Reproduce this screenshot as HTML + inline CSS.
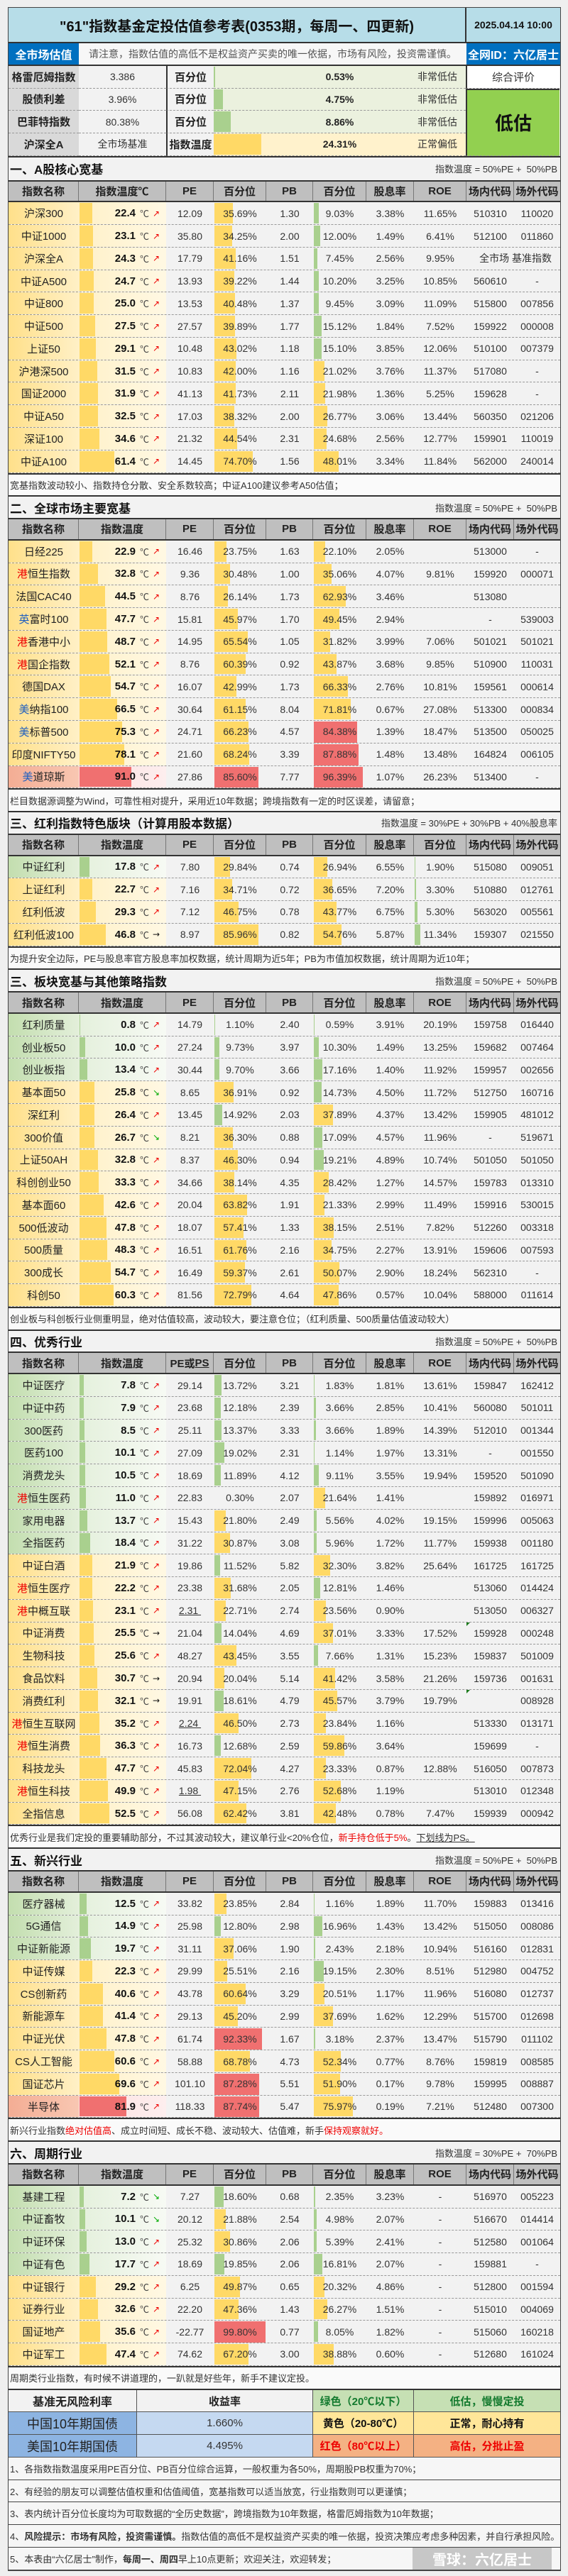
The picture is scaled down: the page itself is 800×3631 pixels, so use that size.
<!DOCTYPE html>
<html><head><meta charset="utf-8">
<style>
*{box-sizing:border-box;margin:0;padding:0}
html,body{width:800px;height:3631px;background:#efefef;overflow:hidden}
body{font-family:"Liberation Sans","Noto Sans CJK SC",sans-serif;color:#333;font-size:14px}
.w{position:absolute;left:12px;top:11px;width:777px;outline:1px solid #444;background:#f2f2f2;overflow:hidden}
.title{display:grid;grid-template-columns:645px 132px;height:50px;background:#b7dde8;border-bottom:2px solid #333}
.title div{display:flex;align-items:center;justify-content:center;font-weight:bold;color:#111}
.title div:first-child{font-size:20px;border-right:2px solid #333}
.title div:last-child{font-size:14px}
.r2{display:grid;grid-template-columns:99px 546px 132px;height:31.77px;border-bottom:2px solid #333}
.r2 div{display:flex;align-items:center;justify-content:center;overflow:hidden;white-space:nowrap}
.blue{background:#0070c0;color:#fff;font-weight:bold;font-size:16px}
.mk{display:grid;grid-template-columns:99px 123px 67px 355px 132px;grid-template-rows:repeat(4,31.77px);border-bottom:2px solid #333}
.mk>div{display:flex;align-items:center;justify-content:center;border-bottom:1px dashed #999;position:relative}
.mk .nm{background:#d9d9d9;font-weight:bold;font-size:15px;color:#222}
.mk .lb{font-size:15px;font-weight:bold;color:#222;border-left:2px solid #333}
.mk .bar{justify-content:center;font-weight:bold;font-size:14px;color:#222}
.mk .bar s{position:absolute;left:0;top:1px;bottom:1px}
.mk .bar em{position:absolute;right:12px;font-style:normal;font-weight:normal;font-size:14px;color:#333}
.mk .rt{border-left:2px solid #333}
.eval{background:#fff;font-size:15px;color:#333}
.low{grid-row:2/5;grid-column:5;background:#92d050;font-size:26px;font-weight:bold;color:#111;border-left:2px solid #333;border-top:2px solid #333;display:flex;align-items:center;justify-content:center}
.sh{height:31.77px;display:flex;align-items:center;justify-content:space-between;padding:0 4px 0 2px;background:#f2f2f2;border-top:2px solid #333;overflow:hidden;white-space:nowrap}
.sh b{font-size:17px;color:#111}
.sh span{font-size:13px;color:#333}
.cols,.r{display:grid;grid-template-columns:99px 123px 67px 74px 66px 75px 67px 74px 67px 65px;height:31.77px}
.cols{background:#bfbfbf;border-top:2px solid #333;border-bottom:2px solid #333}
.cols div{display:flex;align-items:center;justify-content:center;font-weight:bold;font-size:15px;color:#222;border-right:1px solid #777;overflow:hidden;white-space:nowrap}
.cols div:last-child{border-right:0}
.r{border-bottom:1px dashed #999}
.r>*{position:relative;display:flex;align-items:center;justify-content:center;font-style:normal;font-weight:normal;text-decoration:none;background:#f2f2f2;font-size:14px;color:#333;white-space:nowrap;overflow:hidden}
.r>b{font-size:15px;color:#222}
.Y>b{background:linear-gradient(90deg,#ffe08a,#fff0c6)}
.G>b{background:linear-gradient(90deg,#c3deaf,#e3efda)}
.R>b{background:linear-gradient(90deg,#f4ad94,#f8c7b2)}
.Y>.t{background:linear-gradient(90deg,#fff1c8,#fff8e3)}
.G>.t{background:linear-gradient(90deg,#e4f0dc,#f7faf4)}
.R>.t{background:linear-gradient(90deg,#fde0e0,#fdeeee)}
.t s{position:absolute;left:1px;top:1px;bottom:1px}
.Y .t s{background:#ffd966}.G .t s{background:#a9d08e}.R .t s{background:#f07070}
.t em{position:absolute;right:43px;font-style:normal;font-weight:bold;font-size:15px;color:#111}
.t var{position:absolute;left:86px;font-style:normal;font-size:13px;color:#444}
.t kbd{position:absolute;left:104px;font-family:"DejaVu Sans",sans-serif;font-size:12px;color:#e00}
.t kbd.d{color:#0a0}.t kbd.f{color:#111}
.p s{position:absolute;left:1px;top:1px;bottom:1px}
.p span{position:relative}
s.y{background:#ffd966}s.g{background:#a9d08e}s.r{background:#f07070}
.hk{color:#e00}.us{color:#1f5fbf}
.ul{text-decoration:underline!important}
.cm::before{content:"";position:absolute;left:0;top:0;border-top:5px solid #1a7a1a;border-right:5px solid transparent}
.note{height:31.77px;display:flex;align-items:center;padding-left:2px;background:#fafafa;border-top:2px solid #333;font-size:13px;color:#333;white-space:nowrap;overflow:hidden}
.red{color:#e00}
.rf{display:grid;grid-template-columns:181px 248px 142px 206px;border-top:2px solid #333}
.rf div{height:31.77px;display:flex;align-items:center;justify-content:center;border-right:1px solid #555;border-bottom:1px solid #555;white-space:nowrap;overflow:hidden}
.fn{height:31.77px;display:flex;align-items:center;padding-left:2px;background:#f6f6f6;border-bottom:1px solid #444;font-size:13px;color:#333;white-space:nowrap;position:relative;overflow:hidden}
.wm{position:absolute;right:12px;top:0;height:31px;width:196px;background:rgba(160,160,160,.55);color:#fff;font-size:20px;display:flex;align-items:center;justify-content:center;font-weight:bold}
</style></head><body>
<div class="w">
<div class="title"><div>"61"指数基金定投估值参考表(0353期，每周一、四更新)</div><div>2025.04.14 10:00</div></div>
<div class="r2"><div class="blue">全市场估值</div><div style="color:#555;font-size:14px;background:#f7f7f7">请注意，指数估值的高低不是权益资产买卖的唯一依据，市场有风险，投资需谨慎。</div><div class="blue">全网ID：六亿居士</div></div>
<div class="mk">
<div class="nm">格雷厄姆指数</div><div>3.386</div><div class="lb">百分位</div><div class="bar" style="background:#ebf1de"><s style="width:1.5px;background:#a9d08e"></s>0.53%<em>非常低估</em></div><div class="rt eval">综合评价</div>
<div class="nm">股债利差</div><div>3.96%</div><div class="lb">百分位</div><div class="bar" style="background:#ebf1de"><s style="width:13px;background:#a9d08e"></s>4.75%<em>非常低估</em></div>
<div class="nm">巴菲特指数</div><div>80.38%</div><div class="lb">百分位</div><div class="bar" style="background:#ebf1de"><s style="width:24px;background:#a9d08e"></s>8.86%<em>非常低估</em></div>
<div class="nm">沪深全A</div><div>全市场基准</div><div class="lb">指数温度</div><div class="bar" style="background:#fff2cc"><s style="width:67px;background:#ffd966"></s><span style="position:relative">24.31%</span><em>正常偏低</em></div>
<div class="low">低估</div>
</div>

<div class="sh" style="border-top:0"><b>一、A股核心宽基</b><span>指数温度 = 50%PE + &nbsp;50%PB</span></div>
<div class="cols"><div>指数名称</div><div>指数温度℃</div><div>PE</div><div>百分位</div><div>PB</div><div>百分位</div><div>股息率</div><div>ROE</div><div>场内代码</div><div>场外代码</div></div>
<div class="r Y"><b>沪深300</b><i class="t"><s style="width:18px"></s><em>22.4</em><var>℃</var><kbd>↗</kbd></i><i>12.09</i><i class="p"><s class="y" style="width:25.7px"></s><span>35.69%</span></i><i>1.30</i><i class="p"><s class="g" style="width:6.5px"></s><span>9.03%</span></i><i>3.38%</i><i>11.65%</i><i>510310</i><i>110020</i></div>
<div class="r Y"><b>中证1000</b><i class="t"><s style="width:18.5px"></s><em>23.1</em><var>℃</var><kbd>↗</kbd></i><i>35.80</i><i class="p"><s class="y" style="width:24.7px"></s><span>34.25%</span></i><i>2.00</i><i class="p"><s class="g" style="width:8.6px"></s><span>12.00%</span></i><i>1.49%</i><i>6.41%</i><i>512100</i><i>011860</i></div>
<div class="r Y" style="grid-template-columns:99px 123px 67px 74px 66px 75px 67px 74px 132px"><b>沪深全A</b><i class="t"><s style="width:19.4px"></s><em>24.3</em><var>℃</var><kbd>↗</kbd></i><i>17.79</i><i class="p"><s class="y" style="width:29.6px"></s><span>41.16%</span></i><i>1.51</i><i class="p"><s class="g" style="width:5.4px"></s><span>7.45%</span></i><i>2.56%</i><i>9.95%</i><i style="justify-content:flex-end;padding-right:12px">全市场 基准指数</i></div>
<div class="r Y"><b>中证A500</b><i class="t"><s style="width:19.8px"></s><em>24.7</em><var>℃</var><kbd>↗</kbd></i><i>13.93</i><i class="p"><s class="y" style="width:28.2px"></s><span>39.22%</span></i><i>1.44</i><i class="p"><s class="g" style="width:7.3px"></s><span>10.20%</span></i><i>3.25%</i><i>10.85%</i><i>560610</i><i>-</i></div>
<div class="r Y"><b>中证800</b><i class="t"><s style="width:20px"></s><em>25.0</em><var>℃</var><kbd>↗</kbd></i><i>13.53</i><i class="p"><s class="y" style="width:29.1px"></s><span>40.48%</span></i><i>1.37</i><i class="p"><s class="g" style="width:6.8px"></s><span>9.45%</span></i><i>3.09%</i><i>11.09%</i><i>515800</i><i>007856</i></div>
<div class="r Y"><b>中证500</b><i class="t"><s style="width:22px"></s><em>27.5</em><var>℃</var><kbd>↗</kbd></i><i>27.57</i><i class="p"><s class="y" style="width:28.7px"></s><span>39.89%</span></i><i>1.77</i><i class="p"><s class="g" style="width:10.9px"></s><span>15.12%</span></i><i>1.84%</i><i>7.52%</i><i>159922</i><i>000008</i></div>
<div class="r Y"><b>上证50</b><i class="t"><s style="width:23.3px"></s><em>29.1</em><var>℃</var><kbd>↗</kbd></i><i>10.48</i><i class="p"><s class="y" style="width:31px"></s><span>43.02%</span></i><i>1.18</i><i class="p"><s class="g" style="width:10.9px"></s><span>15.10%</span></i><i>3.85%</i><i>12.06%</i><i>510100</i><i>007379</i></div>
<div class="r Y"><b>沪港深500</b><i class="t"><s style="width:25.2px"></s><em>31.5</em><var>℃</var><kbd>↗</kbd></i><i>10.83</i><i class="p"><s class="y" style="width:30.2px"></s><span>42.00%</span></i><i>1.16</i><i class="p"><s class="y" style="width:15.1px"></s><span>21.02%</span></i><i>3.76%</i><i>11.37%</i><i>517080</i><i>-</i></div>
<div class="r Y"><b>国证2000</b><i class="t"><s style="width:25.5px"></s><em>31.9</em><var>℃</var><kbd>↗</kbd></i><i>41.13</i><i class="p"><s class="y" style="width:30px"></s><span>41.73%</span></i><i>2.11</i><i class="p"><s class="y" style="width:15.8px"></s><span>21.98%</span></i><i>1.36%</i><i>5.25%</i><i>159628</i><i>-</i></div>
<div class="r Y"><b>中证A50</b><i class="t"><s style="width:26px"></s><em>32.5</em><var>℃</var><kbd>↗</kbd></i><i>17.03</i><i class="p"><s class="y" style="width:27.6px"></s><span>38.32%</span></i><i>2.00</i><i class="p"><s class="y" style="width:19.3px"></s><span>26.77%</span></i><i>3.06%</i><i>13.44%</i><i>560350</i><i>021206</i></div>
<div class="r Y"><b>深证100</b><i class="t"><s style="width:27.7px"></s><em>34.6</em><var>℃</var><kbd>↗</kbd></i><i>21.32</i><i class="p"><s class="y" style="width:32.1px"></s><span>44.54%</span></i><i>2.31</i><i class="p"><s class="y" style="width:17.8px"></s><span>24.68%</span></i><i>2.56%</i><i>12.77%</i><i>159901</i><i>110019</i></div>
<div class="r Y"><b>中证A100</b><i class="t"><s style="width:49.1px"></s><em>61.4</em><var>℃</var><kbd>↗</kbd></i><i>14.45</i><i class="p"><s class="y" style="width:53.8px"></s><span>74.70%</span></i><i>1.56</i><i class="p"><s class="y" style="width:34.6px"></s><span>48.01%</span></i><i>3.34%</i><i>11.84%</i><i>562000</i><i>240014</i></div>
<div class="note">宽基指数波动较小、指数持仓分散、安全系数较高；中证A100建议参考A50估值；</div>

<div class="sh"><b>二、全球市场主要宽基</b><span>指数温度 = 50%PE + &nbsp;50%PB</span></div>
<div class="cols"><div>指数名称</div><div>指数温度</div><div>PE</div><div>百分位</div><div>PB</div><div>百分位</div><div>股息率</div><div>ROE</div><div>场内代码</div><div>场外代码</div></div>
<div class="r Y"><b>日经225</b><i class="t"><s style="width:18.3px"></s><em>22.9</em><var>℃</var><kbd>↗</kbd></i><i>16.46</i><i class="p"><s class="y" style="width:17.1px"></s><span>23.75%</span></i><i>1.63</i><i class="p"><s class="y" style="width:15.9px"></s><span>22.10%</span></i><i>2.05%</i><i></i><i>513000</i><i>-</i></div>
<div class="r Y"><b><span class="hk">港</span>恒生指数</b><i class="t"><s style="width:26.2px"></s><em>32.8</em><var>℃</var><kbd>↗</kbd></i><i>9.36</i><i class="p"><s class="y" style="width:21.9px"></s><span>30.48%</span></i><i>1.00</i><i class="p"><s class="y" style="width:25.2px"></s><span>35.06%</span></i><i>4.07%</i><i>9.81%</i><i>159920</i><i>000071</i></div>
<div class="r Y"><b>法国CAC40</b><i class="t"><s style="width:35.6px"></s><em>44.5</em><var>℃</var><kbd>↗</kbd></i><i>8.76</i><i class="p"><s class="y" style="width:18.8px"></s><span>26.14%</span></i><i>1.73</i><i class="p"><s class="y" style="width:45.3px"></s><span>62.93%</span></i><i>3.46%</i><i></i><i>513080</i><i></i></div>
<div class="r Y"><b><span class="us">英</span>富时100</b><i class="t"><s style="width:38.2px"></s><em>47.7</em><var>℃</var><kbd>↗</kbd></i><i>15.81</i><i class="p"><s class="y" style="width:33.1px"></s><span>45.97%</span></i><i>1.70</i><i class="p"><s class="y" style="width:35.6px"></s><span>49.45%</span></i><i>2.94%</i><i></i><i>-</i><i>539003</i></div>
<div class="r Y"><b><span class="hk">港</span>香港中小</b><i class="t"><s style="width:39px"></s><em>48.7</em><var>℃</var><kbd>↗</kbd></i><i>14.95</i><i class="p"><s class="y" style="width:47.2px"></s><span>65.54%</span></i><i>1.05</i><i class="p"><s class="y" style="width:22.9px"></s><span>31.82%</span></i><i>3.99%</i><i>7.06%</i><i>501021</i><i>501021</i></div>
<div class="r Y"><b><span class="hk">港</span>国企指数</b><i class="t"><s style="width:41.7px"></s><em>52.1</em><var>℃</var><kbd>↗</kbd></i><i>8.76</i><i class="p"><s class="y" style="width:43.5px"></s><span>60.39%</span></i><i>0.92</i><i class="p"><s class="y" style="width:31.6px"></s><span>43.87%</span></i><i>3.68%</i><i>9.85%</i><i>510900</i><i>110031</i></div>
<div class="r Y"><b>德国DAX</b><i class="t"><s style="width:43.8px"></s><em>54.7</em><var>℃</var><kbd>↗</kbd></i><i>16.07</i><i class="p"><s class="y" style="width:31px"></s><span>42.99%</span></i><i>1.73</i><i class="p"><s class="y" style="width:47.8px"></s><span>66.33%</span></i><i>2.76%</i><i>10.81%</i><i>159561</i><i>000614</i></div>
<div class="r Y"><b><span class="us">美</span>纳指100</b><i class="t"><s style="width:53.2px"></s><em>66.5</em><var>℃</var><kbd>↗</kbd></i><i>30.64</i><i class="p"><s class="y" style="width:44px"></s><span>61.15%</span></i><i>8.04</i><i class="p"><s class="y" style="width:51.7px"></s><span>71.81%</span></i><i>0.67%</i><i>27.08%</i><i>513300</i><i>000834</i></div>
<div class="r Y"><b><span class="us">美</span>标普500</b><i class="t"><s style="width:60.2px"></s><em>75.3</em><var>℃</var><kbd>↗</kbd></i><i>24.71</i><i class="p"><s class="y" style="width:47.7px"></s><span>66.23%</span></i><i>4.57</i><i class="p"><s class="r" style="width:60.8px"></s><span>84.38%</span></i><i>1.39%</i><i>18.47%</i><i>513500</i><i>050025</i></div>
<div class="r Y"><b>印度NIFTY50</b><i class="t"><s style="width:62.5px"></s><em>78.1</em><var>℃</var><kbd>↗</kbd></i><i>21.60</i><i class="p"><s class="y" style="width:49.1px"></s><span>68.24%</span></i><i>3.39</i><i class="p"><s class="r" style="width:63.3px"></s><span>87.88%</span></i><i>1.48%</i><i>13.48%</i><i>164824</i><i>006105</i></div>
<div class="r R"><b><span class="us">美</span>道琼斯</b><i class="t"><s style="width:72.8px"></s><em>91.0</em><var>℃</var><kbd>↗</kbd></i><i>27.86</i><i class="p"><s class="r" style="width:61.6px"></s><span>85.60%</span></i><i>7.77</i><i class="p"><s class="r" style="width:69.4px"></s><span>96.39%</span></i><i>1.07%</i><i>26.23%</i><i>513400</i><i>-</i></div>
<div class="note">栏目数据源调整为Wind，可靠性相对提升，采用近10年数据；跨境指数有一定的时区误差，请留意；</div>

<div class="sh"><b>三、红利指数特色版块（计算用股本数据）</b><span>指数温度 = 30%PE + 30%PB + 40%股息率</span></div>
<div class="cols"><div>指数名称</div><div>指数温度</div><div>PE</div><div>百分位</div><div>PB</div><div>百分位</div><div>股息率</div><div>百分位</div><div>场内代码</div><div>场外代码</div></div>
<div class="r G"><b>中证红利</b><i class="t"><s style="width:14.2px"></s><em>17.8</em><var>℃</var><kbd>↗</kbd></i><i>7.80</i><i class="p"><s class="y" style="width:21.5px"></s><span>29.84%</span></i><i>0.74</i><i class="p"><s class="y" style="width:19.4px"></s><span>26.94%</span></i><i>6.55%</i><i class="p"><s class="g" style="width:1.4px"></s><span>1.90%</span></i><i>515080</i><i>009051</i></div>
<div class="r Y"><b>上证红利</b><i class="t"><s style="width:18.2px"></s><em>22.7</em><var>℃</var><kbd>↗</kbd></i><i>7.16</i><i class="p"><s class="y" style="width:25px"></s><span>34.71%</span></i><i>0.72</i><i class="p"><s class="y" style="width:26.4px"></s><span>36.65%</span></i><i>7.20%</i><i class="p"><s class="g" style="width:2.4px"></s><span>3.30%</span></i><i>510880</i><i>012761</i></div>
<div class="r Y"><b>红利低波</b><i class="t"><s style="width:23.4px"></s><em>29.3</em><var>℃</var><kbd>↗</kbd></i><i>7.12</i><i class="p"><s class="y" style="width:33.7px"></s><span>46.75%</span></i><i>0.78</i><i class="p"><s class="y" style="width:31.5px"></s><span>43.77%</span></i><i>6.75%</i><i class="p"><s class="g" style="width:3.8px"></s><span>5.30%</span></i><i>563020</i><i>005561</i></div>
<div class="r Y"><b>红利低波100</b><i class="t"><s style="width:37.4px"></s><em>46.8</em><var>℃</var><kbd class="f">→</kbd></i><i>8.97</i><i class="p"><s class="y" style="width:61.9px"></s><span>85.96%</span></i><i>0.82</i><i class="p"><s class="y" style="width:39.4px"></s><span>54.76%</span></i><i>5.87%</i><i class="p"><s class="g" style="width:8.2px"></s><span>11.34%</span></i><i>159307</i><i>021550</i></div>
<div class="note">为提升安全边际，PE与股息率官方股息率加权数据，统计周期为近5年；PB为市值加权数据，统计周期为近10年；</div>

<div class="sh"><b>三、板块宽基与其他策略指数</b><span>指数温度 = 50%PE + &nbsp;50%PB</span></div>
<div class="cols"><div>指数名称</div><div>指数温度</div><div>PE</div><div>百分位</div><div>PB</div><div>百分位</div><div>股息率</div><div>ROE</div><div>场内代码</div><div>场外代码</div></div>
<div class="r G"><b>红利质量</b><i class="t"><s style="width:0.6px"></s><em>0.8</em><var>℃</var><kbd>↗</kbd></i><i>14.79</i><i class="p"><s class="g" style="width:1px"></s><span>1.10%</span></i><i>2.40</i><i class="p"><s class="g" style="width:0.5px"></s><span>0.59%</span></i><i>3.91%</i><i>20.19%</i><i>159758</i><i>016440</i></div>
<div class="r G"><b>创业板50</b><i class="t"><s style="width:8px"></s><em>10.0</em><var>℃</var><kbd>↗</kbd></i><i>27.24</i><i class="p"><s class="g" style="width:7px"></s><span>9.73%</span></i><i>3.97</i><i class="p"><s class="g" style="width:7.4px"></s><span>10.30%</span></i><i>1.49%</i><i>13.25%</i><i>159682</i><i>007464</i></div>
<div class="r G"><b>创业板指</b><i class="t"><s style="width:10.7px"></s><em>13.4</em><var>℃</var><kbd>↗</kbd></i><i>30.44</i><i class="p"><s class="g" style="width:7px"></s><span>9.70%</span></i><i>3.66</i><i class="p"><s class="g" style="width:12.4px"></s><span>17.16%</span></i><i>1.40%</i><i>11.92%</i><i>159957</i><i>002656</i></div>
<div class="r Y"><b>基本面50</b><i class="t"><s style="width:20.6px"></s><em>25.8</em><var>℃</var><kbd class="d">↘</kbd></i><i>8.65</i><i class="p"><s class="y" style="width:26.6px"></s><span>36.91%</span></i><i>0.92</i><i class="p"><s class="g" style="width:10.6px"></s><span>14.73%</span></i><i>4.50%</i><i>11.72%</i><i>512750</i><i>160716</i></div>
<div class="r Y"><b>深红利</b><i class="t"><s style="width:21.1px"></s><em>26.4</em><var>℃</var><kbd>↗</kbd></i><i>13.45</i><i class="p"><s class="g" style="width:10.7px"></s><span>14.92%</span></i><i>2.03</i><i class="p"><s class="y" style="width:27.3px"></s><span>37.89%</span></i><i>4.37%</i><i>13.42%</i><i>159905</i><i>481012</i></div>
<div class="r Y"><b>300价值</b><i class="t"><s style="width:21.4px"></s><em>26.7</em><var>℃</var><kbd class="d">↘</kbd></i><i>8.21</i><i class="p"><s class="y" style="width:26.1px"></s><span>36.30%</span></i><i>0.88</i><i class="p"><s class="g" style="width:12.3px"></s><span>17.09%</span></i><i>4.57%</i><i>11.96%</i><i>-</i><i>519671</i></div>
<div class="r Y"><b>上证50AH</b><i class="t"><s style="width:26.2px"></s><em>32.8</em><var>℃</var><kbd>↗</kbd></i><i>8.37</i><i class="p"><s class="y" style="width:33.3px"></s><span>46.30%</span></i><i>0.94</i><i class="p"><s class="g" style="width:13.8px"></s><span>19.21%</span></i><i>4.89%</i><i>10.74%</i><i>501050</i><i>501050</i></div>
<div class="r Y"><b>科创创业50</b><i class="t"><s style="width:26.6px"></s><em>33.3</em><var>℃</var><kbd>↗</kbd></i><i>34.66</i><i class="p"><s class="y" style="width:27.5px"></s><span>38.14%</span></i><i>4.35</i><i class="p"><s class="y" style="width:20.5px"></s><span>28.42%</span></i><i>1.27%</i><i>14.57%</i><i>159783</i><i>013310</i></div>
<div class="r Y"><b>基本面60</b><i class="t"><s style="width:34.1px"></s><em>42.6</em><var>℃</var><kbd>↗</kbd></i><i>20.04</i><i class="p"><s class="y" style="width:46px"></s><span>63.82%</span></i><i>1.91</i><i class="p"><s class="y" style="width:15.4px"></s><span>21.33%</span></i><i>2.99%</i><i>11.49%</i><i>159916</i><i>530015</i></div>
<div class="r Y"><b>500低波动</b><i class="t"><s style="width:38.2px"></s><em>47.8</em><var>℃</var><kbd>↗</kbd></i><i>18.07</i><i class="p"><s class="y" style="width:41.3px"></s><span>57.41%</span></i><i>1.33</i><i class="p"><s class="y" style="width:27.5px"></s><span>38.15%</span></i><i>2.51%</i><i>7.82%</i><i>512260</i><i>003318</i></div>
<div class="r Y"><b>500质量</b><i class="t"><s style="width:38.6px"></s><em>48.3</em><var>℃</var><kbd>↗</kbd></i><i>16.51</i><i class="p"><s class="y" style="width:44.5px"></s><span>61.76%</span></i><i>2.16</i><i class="p"><s class="y" style="width:25px"></s><span>34.75%</span></i><i>2.27%</i><i>13.91%</i><i>159606</i><i>007593</i></div>
<div class="r Y"><b>300成长</b><i class="t"><s style="width:43.8px"></s><em>54.7</em><var>℃</var><kbd>↗</kbd></i><i>16.49</i><i class="p"><s class="y" style="width:42.7px"></s><span>59.37%</span></i><i>2.61</i><i class="p"><s class="y" style="width:36.1px"></s><span>50.07%</span></i><i>2.90%</i><i>18.24%</i><i>562310</i><i>-</i></div>
<div class="r Y"><b>科创50</b><i class="t"><s style="width:48.2px"></s><em>60.3</em><var>℃</var><kbd>↗</kbd></i><i>81.56</i><i class="p"><s class="y" style="width:52.4px"></s><span>72.79%</span></i><i>4.64</i><i class="p"><s class="y" style="width:34.5px"></s><span>47.86%</span></i><i>0.57%</i><i>10.04%</i><i>588000</i><i>011614</i></div>
<div class="note">创业板与科创板行业侧重明显，绝对估值较高，波动较大，要注意仓位；（红利质量、500质量估值波动较大）</div>

<div class="sh"><b>四、优秀行业</b><span>指数温度 = 50%PE + &nbsp;50%PB</span></div>
<div class="cols"><div>指数名称</div><div>指数温度</div><div>PE或<u>PS</u></div><div>百分位</div><div>PB</div><div>百分位</div><div>股息率</div><div>ROE</div><div>场内代码</div><div>场外代码</div></div>
<div class="r G"><b>中证医疗</b><i class="t"><s style="width:6.2px"></s><em>7.8</em><var>℃</var><kbd>↗</kbd></i><i>29.14</i><i class="p"><s class="g" style="width:9.9px"></s><span>13.72%</span></i><i>3.21</i><i class="p"><s class="g" style="width:1.3px"></s><span>1.83%</span></i><i>1.81%</i><i>13.61%</i><i>159847</i><i>162412</i></div>
<div class="r G"><b>中证中药</b><i class="t"><s style="width:6.3px"></s><em>7.9</em><var>℃</var><kbd>↗</kbd></i><i>23.68</i><i class="p"><s class="g" style="width:8.8px"></s><span>12.18%</span></i><i>2.39</i><i class="p"><s class="g" style="width:2.6px"></s><span>3.66%</span></i><i>2.85%</i><i>10.41%</i><i>560080</i><i>501011</i></div>
<div class="r G"><b>300医药</b><i class="t"><s style="width:6.8px"></s><em>8.5</em><var>℃</var><kbd>↗</kbd></i><i>25.11</i><i class="p"><s class="g" style="width:9.6px"></s><span>13.37%</span></i><i>3.33</i><i class="p"><s class="g" style="width:2.6px"></s><span>3.66%</span></i><i>1.89%</i><i>14.39%</i><i>512010</i><i>001344</i></div>
<div class="r G"><b>医药100</b><i class="t"><s style="width:8.1px"></s><em>10.1</em><var>℃</var><kbd>↗</kbd></i><i>27.09</i><i class="p"><s class="g" style="width:13.7px"></s><span>19.02%</span></i><i>2.31</i><i class="p"><s class="g" style="width:0.8px"></s><span>1.14%</span></i><i>1.97%</i><i>13.31%</i><i>-</i><i>001550</i></div>
<div class="r G"><b>消费龙头</b><i class="t"><s style="width:8.4px"></s><em>10.5</em><var>℃</var><kbd>↗</kbd></i><i>18.69</i><i class="p"><s class="g" style="width:8.6px"></s><span>11.89%</span></i><i>4.12</i><i class="p"><s class="g" style="width:6.6px"></s><span>9.11%</span></i><i>3.55%</i><i>19.94%</i><i>159520</i><i>501090</i></div>
<div class="r G"><b><span class="hk">港</span>恒生医药</b><i class="t"><s style="width:8.8px"></s><em>11.0</em><var>℃</var><kbd>↗</kbd></i><i>22.83</i><i class="p"><span>0.30%</span></i><i>2.07</i><i class="p"><s class="y" style="width:15.6px"></s><span>21.64%</span></i><i>1.41%</i><i></i><i>159892</i><i>016971</i></div>
<div class="r G"><b>家用电器</b><i class="t"><s style="width:11px"></s><em>13.7</em><var>℃</var><kbd>↗</kbd></i><i>15.43</i><i class="p"><s class="y" style="width:15.7px"></s><span>21.80%</span></i><i>2.49</i><i class="p"><s class="g" style="width:4px"></s><span>5.56%</span></i><i>4.02%</i><i>19.15%</i><i>159996</i><i>005063</i></div>
<div class="r G"><b>全指医药</b><i class="t"><s style="width:14.7px"></s><em>18.4</em><var>℃</var><kbd>↗</kbd></i><i>31.22</i><i class="p"><s class="y" style="width:22.2px"></s><span>30.87%</span></i><i>3.08</i><i class="p"><s class="g" style="width:4.3px"></s><span>5.96%</span></i><i>1.72%</i><i>11.77%</i><i>159938</i><i>001180</i></div>
<div class="r Y"><b>中证白酒</b><i class="t"><s style="width:17.5px"></s><em>21.9</em><var>℃</var><kbd>↗</kbd></i><i>19.86</i><i class="p"><s class="g" style="width:8.3px"></s><span>11.52%</span></i><i>5.82</i><i class="p"><s class="y" style="width:23.3px"></s><span>32.30%</span></i><i>3.82%</i><i>25.64%</i><i>161725</i><i>161725</i></div>
<div class="r Y"><b><span class="hk">港</span>恒生医疗</b><i class="t"><s style="width:17.8px"></s><em>22.2</em><var>℃</var><kbd>↗</kbd></i><i>23.38</i><i class="p"><s class="y" style="width:22.8px"></s><span>31.68%</span></i><i>2.05</i><i class="p"><s class="g" style="width:9.2px"></s><span>12.81%</span></i><i>1.46%</i><i></i><i>513060</i><i>014424</i></div>
<div class="r Y"><b><span class="hk">港</span>中概互联</b><i class="t"><s style="width:18.5px"></s><em>23.1</em><var>℃</var><kbd>↗</kbd></i><i class="ul">2.31&nbsp;</i><i class="p"><s class="y" style="width:16.4px"></s><span>22.71%</span></i><i>2.74</i><i class="p"><s class="y" style="width:17px"></s><span>23.56%</span></i><i>0.90%</i><i></i><i>513050</i><i>006327</i></div>
<div class="r Y"><b>中证消费</b><i class="t"><s style="width:20.4px"></s><em>25.5</em><var>℃</var><kbd class="f">→</kbd></i><i>21.04</i><i class="p"><s class="g" style="width:10.1px"></s><span>14.04%</span></i><i>4.69</i><i class="p"><s class="y" style="width:26.6px"></s><span>37.01%</span></i><i>3.33%</i><i>17.52%</i><i class="cm">159928</i><i>000248</i></div>
<div class="r Y"><b>生物科技</b><i class="t"><s style="width:20.5px"></s><em>25.6</em><var>℃</var><kbd>↗</kbd></i><i>48.27</i><i class="p"><s class="y" style="width:31.3px"></s><span>43.45%</span></i><i>3.55</i><i class="p"><s class="g" style="width:5.5px"></s><span>7.66%</span></i><i>1.31%</i><i>15.23%</i><i>159837</i><i>501009</i></div>
<div class="r Y"><b>食品饮料</b><i class="t"><s style="width:24.6px"></s><em>30.7</em><var>℃</var><kbd class="f">→</kbd></i><i>20.94</i><i class="p"><s class="y" style="width:14.4px"></s><span>20.04%</span></i><i>5.14</i><i class="p"><s class="y" style="width:29.8px"></s><span>41.42%</span></i><i>3.58%</i><i>21.26%</i><i>159736</i><i>001631</i></div>
<div class="r Y"><b>消费红利</b><i class="t"><s style="width:25.7px"></s><em>32.1</em><var>℃</var><kbd class="f">→</kbd></i><i>19.91</i><i class="p"><s class="g" style="width:13.4px"></s><span>18.61%</span></i><i>4.79</i><i class="p"><s class="y" style="width:32.8px"></s><span>45.57%</span></i><i>3.79%</i><i>19.79%</i><i class="cm"></i><i>008928</i></div>
<div class="r Y"><b><span class="hk">港</span>恒生互联网</b><i class="t"><s style="width:28.2px"></s><em>35.2</em><var>℃</var><kbd>↗</kbd></i><i class="ul">2.24&nbsp;</i><i class="p"><s class="y" style="width:33.5px"></s><span>46.50%</span></i><i>2.73</i><i class="p"><s class="y" style="width:17.2px"></s><span>23.84%</span></i><i>1.16%</i><i></i><i>513330</i><i>013171</i></div>
<div class="r Y"><b><span class="hk">港</span>恒生消费</b><i class="t"><s style="width:29px"></s><em>36.3</em><var>℃</var><kbd>↗</kbd></i><i>16.73</i><i class="p"><s class="g" style="width:9.1px"></s><span>12.68%</span></i><i>2.59</i><i class="p"><s class="y" style="width:43.1px"></s><span>59.86%</span></i><i>3.64%</i><i></i><i>159699</i><i>-</i></div>
<div class="r Y"><b>科技龙头</b><i class="t"><s style="width:38.2px"></s><em>47.7</em><var>℃</var><kbd>↗</kbd></i><i>45.83</i><i class="p"><s class="y" style="width:51.9px"></s><span>72.04%</span></i><i>4.27</i><i class="p"><s class="y" style="width:16.8px"></s><span>23.33%</span></i><i>0.87%</i><i>12.88%</i><i>516050</i><i>007873</i></div>
<div class="r Y"><b><span class="hk">港</span>恒生科技</b><i class="t"><s style="width:39.9px"></s><em>49.9</em><var>℃</var><kbd>↗</kbd></i><i class="ul">1.98&nbsp;</i><i class="p"><s class="y" style="width:33.9px"></s><span>47.15%</span></i><i>2.76</i><i class="p"><s class="y" style="width:37.9px"></s><span>52.68%</span></i><i>1.19%</i><i></i><i>513010</i><i>012348</i></div>
<div class="r Y"><b>全指信息</b><i class="t"><s style="width:42px"></s><em>52.5</em><var>℃</var><kbd>↗</kbd></i><i>56.08</i><i class="p"><s class="y" style="width:44.9px"></s><span>62.42%</span></i><i>3.81</i><i class="p"><s class="y" style="width:30.6px"></s><span>42.48%</span></i><i>0.78%</i><i>7.47%</i><i>159939</i><i>000942</i></div>
<div class="note">优秀行业是我们定投的重要辅助部分，不过其波动较大，建议单行业&lt;20%仓位，<span class="red">新手持仓低于5%</span>。<u>下划线为PS。</u></div>

<div class="sh"><b>五、新兴行业</b><span>指数温度 = 50%PE + &nbsp;50%PB</span></div>
<div class="cols"><div>指数名称</div><div>指数温度</div><div>PE</div><div>百分位</div><div>PB</div><div>百分位</div><div>股息率</div><div>ROE</div><div>场内代码</div><div>场外代码</div></div>
<div class="r G"><b>医疗器械</b><i class="t"><s style="width:10px"></s><em>12.5</em><var>℃</var><kbd>↗</kbd></i><i>33.82</i><i class="p"><s class="y" style="width:17.2px"></s><span>23.85%</span></i><i>2.84</i><i class="p"><s class="g" style="width:0.8px"></s><span>1.16%</span></i><i>1.89%</i><i>11.70%</i><i>159883</i><i>013416</i></div>
<div class="r G"><b>5G通信</b><i class="t"><s style="width:11.9px"></s><em>14.9</em><var>℃</var><kbd>↗</kbd></i><i>25.98</i><i class="p"><s class="g" style="width:9.2px"></s><span>12.80%</span></i><i>2.98</i><i class="p"><s class="g" style="width:12.2px"></s><span>16.96%</span></i><i>1.43%</i><i>13.42%</i><i>515050</i><i>008086</i></div>
<div class="r G"><b>中证新能源</b><i class="t"><s style="width:15.8px"></s><em>19.7</em><var>℃</var><kbd>↗</kbd></i><i>31.11</i><i class="p"><s class="y" style="width:26.7px"></s><span>37.06%</span></i><i>1.90</i><i class="p"><s class="g" style="width:1.7px"></s><span>2.43%</span></i><i>2.18%</i><i>10.94%</i><i>516160</i><i>012831</i></div>
<div class="r Y"><b>中证传媒</b><i class="t"><s style="width:17.8px"></s><em>22.3</em><var>℃</var><kbd>↗</kbd></i><i>29.99</i><i class="p"><s class="y" style="width:18.4px"></s><span>25.51%</span></i><i>2.16</i><i class="p"><s class="g" style="width:13.8px"></s><span>19.15%</span></i><i>2.30%</i><i>8.51%</i><i>512980</i><i>004752</i></div>
<div class="r Y"><b>CS创新药</b><i class="t"><s style="width:32.5px"></s><em>40.6</em><var>℃</var><kbd>↗</kbd></i><i>43.78</i><i class="p"><s class="y" style="width:43.7px"></s><span>60.64%</span></i><i>3.29</i><i class="p"><s class="y" style="width:14.8px"></s><span>20.51%</span></i><i>1.17%</i><i>11.96%</i><i>516080</i><i>012737</i></div>
<div class="r Y"><b>新能源车</b><i class="t"><s style="width:33.1px"></s><em>41.4</em><var>℃</var><kbd>↗</kbd></i><i>29.13</i><i class="p"><s class="y" style="width:32.5px"></s><span>45.20%</span></i><i>2.99</i><i class="p"><s class="y" style="width:27.1px"></s><span>37.69%</span></i><i>1.62%</i><i>12.29%</i><i>515700</i><i>012698</i></div>
<div class="r Y"><b>中证光伏</b><i class="t"><s style="width:38.2px"></s><em>47.8</em><var>℃</var><kbd>↗</kbd></i><i>61.74</i><i class="p"><s class="r" style="width:66.5px"></s><span>92.33%</span></i><i>1.67</i><i class="p"><s class="g" style="width:2.3px"></s><span>3.18%</span></i><i>2.37%</i><i>13.47%</i><i>515790</i><i>011102</i></div>
<div class="r Y"><b>CS人工智能</b><i class="t"><s style="width:48.5px"></s><em>60.6</em><var>℃</var><kbd>↗</kbd></i><i>58.88</i><i class="p"><s class="y" style="width:49.5px"></s><span>68.78%</span></i><i>4.73</i><i class="p"><s class="y" style="width:37.7px"></s><span>52.34%</span></i><i>0.77%</i><i>8.76%</i><i>159819</i><i>008585</i></div>
<div class="r Y"><b>国证芯片</b><i class="t"><s style="width:55.7px"></s><em>69.6</em><var>℃</var><kbd>↗</kbd></i><i>101.10</i><i class="p"><s class="r" style="width:62.8px"></s><span>87.28%</span></i><i>5.51</i><i class="p"><s class="y" style="width:37.4px"></s><span>51.90%</span></i><i>0.17%</i><i>9.78%</i><i>159995</i><i>008887</i></div>
<div class="r R"><b>半导体</b><i class="t"><s style="width:65.5px"></s><em>81.9</em><var>℃</var><kbd>↗</kbd></i><i>118.33</i><i class="p"><s class="r" style="width:63.2px"></s><span>87.74%</span></i><i>5.47</i><i class="p"><s class="y" style="width:54.7px"></s><span>75.97%</span></i><i>0.19%</i><i>7.21%</i><i>512480</i><i>007300</i></div>
<div class="note">新兴行业指数<span class="red">绝对估值高</span>、成立时间短、成长不稳、波动较大、估值难，新手<span class="red">保持观察就好。</span></div>

<div class="sh"><b>六、周期行业</b><span>指数温度 = 30%PE + &nbsp;70%PB</span></div>
<div class="cols"><div>指数名称</div><div>指数温度</div><div>PE</div><div>百分位</div><div>PB</div><div>百分位</div><div>股息率</div><div>ROE</div><div>场内代码</div><div>场外代码</div></div>
<div class="r G"><b>基建工程</b><i class="t"><s style="width:5.8px"></s><em>7.2</em><var>℃</var><kbd class="d">↘</kbd></i><i>7.27</i><i class="p"><s class="g" style="width:13.4px"></s><span>18.60%</span></i><i>0.68</i><i class="p"><s class="g" style="width:1.7px"></s><span>2.35%</span></i><i>3.23%</i><i>-</i><i>516970</i><i>005223</i></div>
<div class="r G"><b>中证畜牧</b><i class="t"><s style="width:8.1px"></s><em>10.1</em><var>℃</var><kbd class="d">↘</kbd></i><i>20.12</i><i class="p"><s class="y" style="width:15.8px"></s><span>21.88%</span></i><i>2.54</i><i class="p"><s class="g" style="width:3.6px"></s><span>4.98%</span></i><i>2.07%</i><i>-</i><i>516670</i><i>014414</i></div>
<div class="r G"><b>中证环保</b><i class="t"><s style="width:10.4px"></s><em>13.0</em><var>℃</var><kbd>↗</kbd></i><i>25.32</i><i class="p"><s class="y" style="width:22.2px"></s><span>30.86%</span></i><i>2.06</i><i class="p"><s class="g" style="width:3.9px"></s><span>5.39%</span></i><i>2.41%</i><i>-</i><i>512580</i><i>001064</i></div>
<div class="r G"><b>中证有色</b><i class="t"><s style="width:14.2px"></s><em>17.7</em><var>℃</var><kbd>↗</kbd></i><i>18.69</i><i class="p"><s class="g" style="width:14.3px"></s><span>19.85%</span></i><i>2.06</i><i class="p"><s class="g" style="width:12.1px"></s><span>16.81%</span></i><i>2.07%</i><i>-</i><i>159881</i><i>-</i></div>
<div class="r Y"><b>中证银行</b><i class="t"><s style="width:23.4px"></s><em>29.2</em><var>℃</var><kbd>↗</kbd></i><i>6.25</i><i class="p"><s class="y" style="width:35.9px"></s><span>49.87%</span></i><i>0.65</i><i class="p"><s class="y" style="width:14.6px"></s><span>20.32%</span></i><i>4.86%</i><i>-</i><i>512800</i><i>001594</i></div>
<div class="r Y"><b>证券行业</b><i class="t"><s style="width:26.1px"></s><em>32.6</em><var>℃</var><kbd>↗</kbd></i><i>22.20</i><i class="p"><s class="y" style="width:34.1px"></s><span>47.36%</span></i><i>1.43</i><i class="p"><s class="y" style="width:18.9px"></s><span>26.27%</span></i><i>1.51%</i><i>-</i><i>515010</i><i>004069</i></div>
<div class="r Y"><b>国证地产</b><i class="t"><s style="width:28.5px"></s><em>35.6</em><var>℃</var><kbd>↗</kbd></i><i>-22.77</i><i class="p"><s class="r" style="width:71.9px"></s><span>99.80%</span></i><i>0.77</i><i class="p"><s class="g" style="width:5.8px"></s><span>8.05%</span></i><i>1.82%</i><i>-</i><i>515060</i><i>160218</i></div>
<div class="r Y"><b>中证军工</b><i class="t"><s style="width:37.9px"></s><em>47.4</em><var>℃</var><kbd>↗</kbd></i><i>74.62</i><i class="p"><s class="y" style="width:48.4px"></s><span>67.20%</span></i><i>3.00</i><i class="p"><s class="y" style="width:28px"></s><span>38.88%</span></i><i>0.60%</i><i>-</i><i>512680</i><i>161024</i></div>
<div class="note">周期类行业指数，有时候不讲道理的，一趴就是好些年，新手不建议定投。</div>

<div class="rf">
<div style="background:#f2f2f2;font-weight:bold;font-size:16px;color:#222">基准无风险利率</div><div style="background:#f2f2f2;font-weight:bold;font-size:15px;color:#222">收益率</div><div style="background:#c6e0b4;color:#137a2e;font-weight:bold;font-size:15px">绿色（20℃以下）</div><div style="background:#c6e0b4;color:#137a2e;font-weight:bold;font-size:15px;border-right:0">低估，慢慢定投</div>
<div style="background:#8db4e2;font-size:18px;color:#222">中国10年期国债</div><div style="background:#c5d9f1;font-size:15px">1.660%</div><div style="background:#ffe699;font-weight:bold;font-size:15px;color:#111">黄色（20-80℃）</div><div style="background:#ffe699;font-weight:bold;font-size:15px;color:#111;border-right:0">正常，耐心持有</div>
<div style="background:#8db4e2;font-size:18px;color:#222">美国10年期国债</div><div style="background:#c5d9f1;font-size:15px">4.495%</div><div style="background:#f4b183;font-weight:bold;font-size:15px;color:#e00">红色（80℃以上）</div><div style="background:#f4b183;font-weight:bold;font-size:15px;color:#e00;border-right:0">高估，分批止盈</div>
</div>
<div class="fn">1、各指数指数温度采用PE百分位、PB百分位综合运算，一般权重为各50%，周期股PB权重为70%；</div>
<div class="fn">2、有经验的朋友可以调整估值权重和估值阈值，宽基指数可以适当放宽，行业指数则可以更谨慎；</div>
<div class="fn">3、表内统计百分位长度均为可取数据的“全历史数据”，跨境指数为10年数据，格雷厄姆指数为10年数据；</div>
<div class="fn">4、<b>风险提示：市场有风险，投资需谨慎。</b>指数估值的高低不是权益资产买卖的唯一依据，投资决策应考虑多种因素，并自行承担风险。</div>
<div class="fn">5、本表由“六亿居士”制作，<b>每周一、周四</b>早上10点更新；欢迎关注，欢迎转发；<div class="wm">雪球：六亿居士</div></div>
</div>
</body></html>
